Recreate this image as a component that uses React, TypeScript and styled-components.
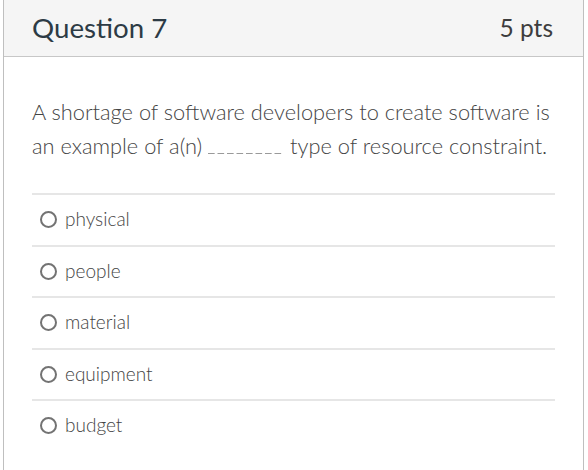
import React from "react";
import styled, { createGlobalStyle } from "styled-components";

const Global = createGlobalStyle`
  html, body { margin: 0; padding: 0; background: #ffffff; }
  body { font-family: Lato, "Open Sans", sans-serif; }
`;

const Card = styled.div`
  margin: -1px 0 0 3px;
  width: 581px;
  border: 1px solid #bfbfbf;
  background: #fff;
  min-height: 520px;
  box-sizing: border-box;
`;

const Header = styled.div`
  display: flex;
  align-items: center;
  justify-content: space-between;
  height: 57px;
  box-sizing: border-box;
  padding: 0 30px 2px 28px;
  background: #f5f5f5;
  border-bottom: 1px solid #c7c7c7;
`;

const Title = styled.h2`
  margin: 0;
  font-family: Lato, sans-serif;
  font-weight: 400;
  font-size: 27.7px;
  color: #2d3b45;
`;

const Points = styled.span`
  font-family: Lato, sans-serif;
  font-size: 24.5px;
  color: #3d3d3d;
`;

const Body = styled.div`
  padding: 38px 26px 0 28px;
`;

const Prompt = styled.p`
  margin: 0 0 30px;
  font-family: Lato, sans-serif;
  font-weight: 300;
  font-size: 21.8px;
  line-height: 34px;
  color: #444;
  white-space: nowrap;
`;

const Blank = styled.span`
  display: inline-block;
  width: 76px;
  margin: 0;
  height: 20px;
  vertical-align: baseline;
  background-image: linear-gradient(to right, #9a9a9a 0 7px, transparent 7px 9.5px);
  background-size: 9.5px 1px;
  background-repeat: repeat-x;
  background-position: 0 19px;
`;

const Answers = styled.div`
  display: flex;
  flex-direction: column;
  margin-right: 2px;
`;

const Answer = styled.label`
  display: flex;
  align-items: center;
  gap: 8px;
  height: 51.5px;
  box-sizing: border-box;
  padding: 0 0 2px 8px;
  border-top: 2px solid #e6e6e6;
  font-family: Lato, sans-serif;
  font-weight: 300;
  font-size: 19px;
  color: #444;
`;

const Radio = styled.span`
  width: 17px;
  height: 17px;
  box-sizing: border-box;
  border: 2px solid #737373;
  border-radius: 50%;
  flex: none;
  margin-top: 2px;
`;

const options = ["physical", "people", "material", "equipment", "budget"];

export default function App() {
  return (
    <>
      <Global />
      <Card>
        <Header>
          <Title>Question 7</Title>
          <Points>5 pts</Points>
        </Header>
        <Body>
          <Prompt>
            A shortage of software developers to create software is
            <br />
            an example of a(n) <Blank aria-label="blank" /> type of resource constraint.
          </Prompt>
          <Answers>
            {options.map((o) => (
              <Answer key={o}>
                <Radio />
                {o}
              </Answer>
            ))}
          </Answers>
        </Body>
      </Card>
    </>
  );
}
